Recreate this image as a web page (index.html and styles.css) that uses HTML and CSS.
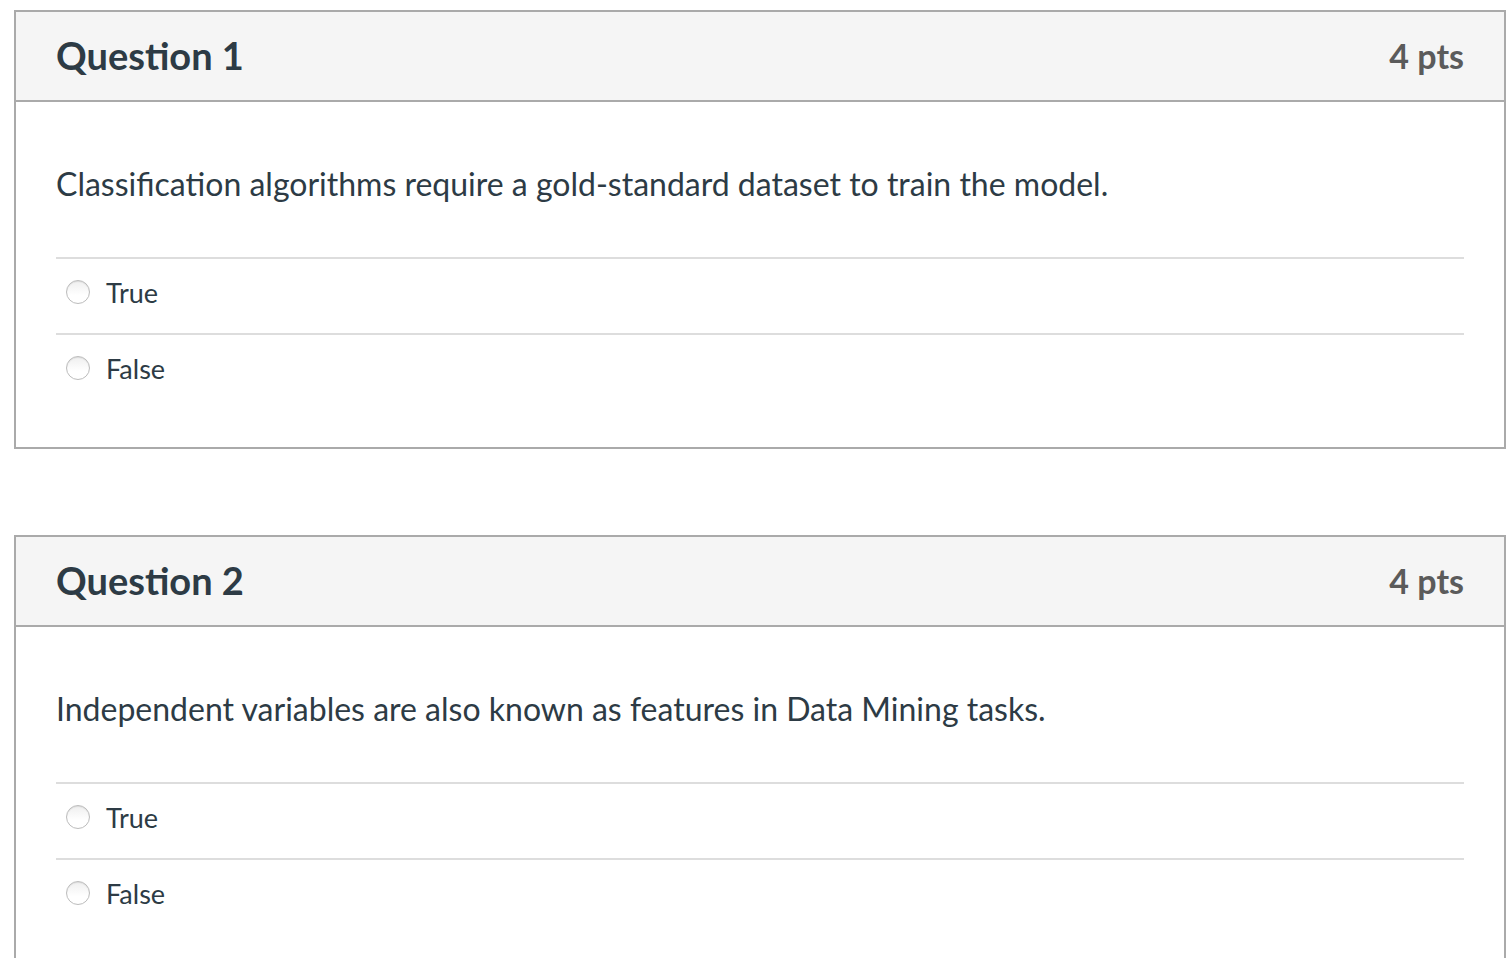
FILE: index.html
```html
<!DOCTYPE html>
<html>
<head>
<meta charset="utf-8">
<link rel="stylesheet" href="styles.css">
</head>
<body>
<div class="page">
  <div class="question">
    <div class="q-header">
      <h2 class="q-title">Question 1</h2>
      <div class="q-points">4 pts</div>
    </div>
    <div class="q-body">
      <p class="q-text">Classification algorithms require a gold-standard dataset to train the model.</p>
      <div class="answers">
        <label class="answer"><span class="radio"></span><span class="answer-label">True</span></label>
        <label class="answer"><span class="radio"></span><span class="answer-label">False</span></label>
      </div>
    </div>
  </div>
  <div class="question">
    <div class="q-header">
      <h2 class="q-title">Question 2</h2>
      <div class="q-points">4 pts</div>
    </div>
    <div class="q-body">
      <p class="q-text">Independent variables are also known as features in Data Mining tasks.</p>
      <div class="answers">
        <label class="answer"><span class="radio"></span><span class="answer-label">True</span></label>
        <label class="answer"><span class="radio"></span><span class="answer-label">False</span></label>
      </div>
    </div>
  </div>
</div>
</body>
</html>
```
FILE: styles.css
```css
html, body {
  margin: 0;
  padding: 0;
  background: #ffffff;
}
body {
  font-family: Lato, "Open Sans", "Liberation Sans", sans-serif;
  color: #2d3b45;
  overflow: hidden;
}
.page {
  padding: 10px 0 0 14px;
  display: flex;
  flex-direction: column;
  gap: 86px;
}
.question {
  width: 1488px;
  border: 2px solid #aaaaaa;
  background: #fff;
}
.q-header {
  height: 90px;
  box-sizing: border-box;
  padding: 0 40px 2px 40px;
  background: #f5f5f5;
  border-bottom: 2px solid #aaaaaa;
  display: flex;
  align-items: center;
  justify-content: space-between;
}
.q-title {
  margin: 0;
  font-size: 38px;
  font-weight: 700;
  color: #2d3b45;
}
.q-points {
  font-size: 34px;
  font-weight: 700;
  color: #5b5b5b;
}
.q-body {
  padding: 0 40px 0 40px;
}
.q-text {
  margin: 0;
  height: 155px;
  font-size: 32px;
  line-height: 38px;
  padding-top: 63px;
  box-sizing: border-box;
}
.answers {
  display: flex;
  flex-direction: column;
}
.answer {
  height: 66px;
  padding-bottom: 8px;
  border-top: 2px solid #dddddd;
  display: flex;
  align-items: center;
  gap: 16px;
  padding-left: 10px;
  font-size: 27px;
}
.answers .answer:last-child {
  height: 114px;
  padding-bottom: 46px;
  box-sizing: border-box;
}
.radio {
  width: 22px;
  height: 22px;
  border-radius: 50%;
  border: 1px solid #bcbcbc;
  background: linear-gradient(#efefef, #ffffff 65%);
  box-shadow: inset 0 1px 1px rgba(0,0,0,0.08);
  flex: none;
}
.answer-label {
  color: #2d3b45;
}
```
